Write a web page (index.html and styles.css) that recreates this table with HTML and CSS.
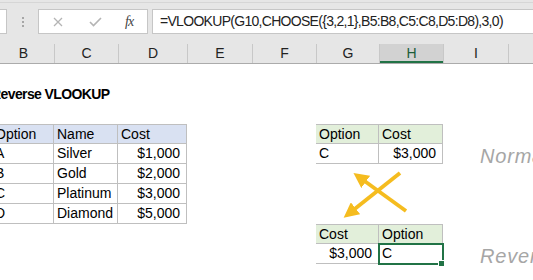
FILE: index.html
```html
<!DOCTYPE html>
<html lang="en">
<head>
    <meta charset="UTF-8">
    <meta name="viewport" content="width=device-width, initial-scale=1.0">
    <title>Reverse VLOOKUP</title>
    <link rel="stylesheet" href="styles.css">
</head>
<body>

    <div class="topbar">
        <div class="formula-bar">
            <div class="name-box"></div>
            <div class="grip"><span></span><span></span><span></span></div>
            <div class="fx-box">
                <svg class="icon-cancel" width="10" height="10" viewBox="0 0 10 10">
                    <path d="M1 1 L9 9 M9 1 L1 9" stroke="#b4b4b4" stroke-width="1.3" fill="none"/>
                </svg>
                <svg class="icon-enter" width="13" height="10" viewBox="0 0 13 10">
                    <path d="M1 5 L4.5 8.5 L12 1" stroke="#b4b4b4" stroke-width="1.6" fill="none"/>
                </svg>
                <span class="fx">fx</span>
            </div>
            <div class="formula">=VLOOKUP(G10,CHOOSE({3,2,1},B5:B8,C5:C8,D5:D8),3,0)</div>
        </div>

        <div class="col-headers">
            <div class="col-head">B</div>
            <div class="col-head">C</div>
            <div class="col-head">D</div>
            <div class="col-head">E</div>
            <div class="col-head">F</div>
            <div class="col-head">G</div>
            <div class="col-head active">H</div>
            <div class="col-head">I</div>
            <div class="col-head"></div>
        </div>
    </div>

    <div class="sheet">
        <div class="title">Reverse VLOOKUP</div>

        <!-- source table B4:D8 -->
        <div class="cell head blue top left" style="grid-column:1;grid-row:4">Option</div>
        <div class="cell head blue top" style="grid-column:2;grid-row:4">Name</div>
        <div class="cell head blue top last" style="grid-column:3;grid-row:4">Cost</div>

        <div class="cell left" style="grid-column:1;grid-row:5">A</div>
        <div class="cell" style="grid-column:2;grid-row:5">Silver</div>
        <div class="cell num last" style="grid-column:3;grid-row:5">$1,000</div>

        <div class="cell left" style="grid-column:1;grid-row:6">B</div>
        <div class="cell" style="grid-column:2;grid-row:6">Gold</div>
        <div class="cell num last" style="grid-column:3;grid-row:6">$2,000</div>

        <div class="cell left" style="grid-column:1;grid-row:7">C</div>
        <div class="cell" style="grid-column:2;grid-row:7">Platinum</div>
        <div class="cell num last" style="grid-column:3;grid-row:7">$3,000</div>

        <div class="cell left bottom" style="grid-column:1;grid-row:8">D</div>
        <div class="cell bottom" style="grid-column:2;grid-row:8">Diamond</div>
        <div class="cell num last bottom" style="grid-column:3;grid-row:8">$5,000</div>

        <!-- normal lookup G4:H5 -->
        <div class="cell head green top left" style="grid-column:6;grid-row:4">Option</div>
        <div class="cell head green top last" style="grid-column:7;grid-row:4">Cost</div>
        <div class="cell left bottom" style="grid-column:6;grid-row:5">C</div>
        <div class="cell num last bottom" style="grid-column:7;grid-row:5">$3,000</div>

        <svg class="arrows" width="127" height="60" viewBox="0 0 127 60">
            <defs>
                <marker id="head" markerWidth="4" markerHeight="4" refX="2.2" refY="2" orient="auto" markerUnits="strokeWidth">
                    <path d="M0 0 L4 2 L0 4 Z" fill="#f5bc1f"/>
                </marker>
            </defs>
            <line x1="84" y1="9" x2="33" y2="49.5" stroke="#f5bc1f" stroke-width="3.8" marker-end="url(#head)"/>
            <line x1="90" y1="47" x2="43" y2="13" stroke="#f5bc1f" stroke-width="3.8" marker-end="url(#head)"/>
        </svg>

        <!-- reverse lookup G9:H10 -->
        <div class="cell head green top left" style="grid-column:6;grid-row:9">Cost</div>
        <div class="cell head green top last" style="grid-column:7;grid-row:9">Option</div>
        <div class="cell num left bottom" style="grid-column:6;grid-row:10">$3,000</div>
        <div class="cell last bottom selected" style="grid-column:7;grid-row:10">C</div>

        <div class="note" style="grid-row:5">Normal</div>
        <div class="note" style="grid-row:10">Reverse</div>
    </div>

</body>
</html>
```

FILE: styles.css
```css
body {
    margin: 0;
    width: 533px;
    height: 280px;
    overflow: hidden;
    background-color: #fff;
    font-family: 'Liberation Sans', Arial, sans-serif;
    color: #000;
}

/* ---- formula bar + column letters ---- */

.topbar {
    background-color: #e6e6e6;
    padding-top: 2px;
}

.formula-bar {
    display: flex;
    height: 25px;
    padding-top: 6px;
    border-top: 1px solid #d6d6d6;
}

.name-box {
    width: 60px;
    margin-left: -53px;
    box-sizing: border-box;
    background-color: #fff;
    border: 1px solid #c6c6c6;
}

.grip {
    width: 31px;
    display: flex;
    flex-direction: column;
    align-items: center;
    justify-content: center;
    gap: 2px;
}

.grip span {
    width: 2px;
    height: 2px;
    background-color: #a6a6a6;
}

.fx-box {
    width: 110px;
    box-sizing: border-box;
    display: flex;
    align-items: center;
    background-color: #fff;
    border: 1px solid #c6c6c6;
}

.icon-cancel {
    margin-left: 14px;
}

.icon-enter {
    margin-left: 26px;
}

.fx {
    margin-left: 23px;
    font-family: 'Liberation Serif', 'Times New Roman', serif;
    font-style: italic;
    font-size: 14px;
    color: #444;
    letter-spacing: -1px;
}

.formula {
    flex: 1;
    margin-left: 4px;
    padding-left: 7px;
    box-sizing: border-box;
    background-color: #fff;
    border: 1px solid #c6c6c6;
    border-right: none;
    font-size: 14px;
    letter-spacing: -0.7px;
    line-height: 23px;
    color: #222;
    white-space: nowrap;
}

.col-headers {
    display: grid;
    grid-template-columns: 62px 64px 69px 65px 64px 63px 64px 65px 1fr;
    margin-left: -8px;
    margin-top: 10px;
    border-bottom: 1px solid #ababab;
}

.col-head {
    height: 19px;
    line-height: 19px;
    border-left: 1px solid #c8c8c8;
    text-align: center;
    font-size: 14px;
    color: #222;
}

.col-head.active {
    background-color: #d2d2d2;
    color: #1d5e3a;
    box-shadow: inset 0 -2px 0 #217346;
}

/* ---- worksheet ---- */

.sheet {
    display: grid;
    grid-template-columns: 62px 64px 69px 65px 64px 63px 64px 65px 1fr;
    grid-template-rows: repeat(11, 20px);
    margin-left: -8px;
    font-size: 14px;
    line-height: 20px;
}

.title {
    grid-column: 1 / 4;
    grid-row: 2;
    margin-left: -1px;
    font-weight: bold;
    letter-spacing: -0.6px;
    white-space: nowrap;
}

.cell {
    box-sizing: border-box;
    padding: 0 3px;
    border-bottom: 1px solid #bfbfbf;
    border-right: 1px solid #bfbfbf;
    white-space: nowrap;
    line-height: 19px;
}

.cell.top {
    border-top: 1px solid #bfbfbf;
}

.cell.top.head {
    line-height: 18px;
}

.cell.blue {
    background-color: #d9e1f2;
}

.cell.green {
    background-color: #e2efda;
}

.cell.num {
    text-align: right;
    padding-right: 6px;
}

.cell.selected {
    position: relative;
    outline: 2px solid #217346;
    outline-offset: -1px;
}

/* fill handle */
.cell.selected::after {
    content: '';
    position: absolute;
    right: -3px;
    bottom: -4px;
    width: 5px;
    height: 5px;
    background-color: #217346;
    border: 1px solid #fff;
}

.arrows {
    grid-column: 6 / 8;
    grid-row: 6 / 9;
}

.note {
    grid-column: 8 / 10;
    padding-left: 37px;
    padding-top: 2px;
    font-size: 20px;
    font-style: italic;
    letter-spacing: 0.8px;
    color: #a6a6a6;
    white-space: nowrap;
    overflow: hidden;
}
```
